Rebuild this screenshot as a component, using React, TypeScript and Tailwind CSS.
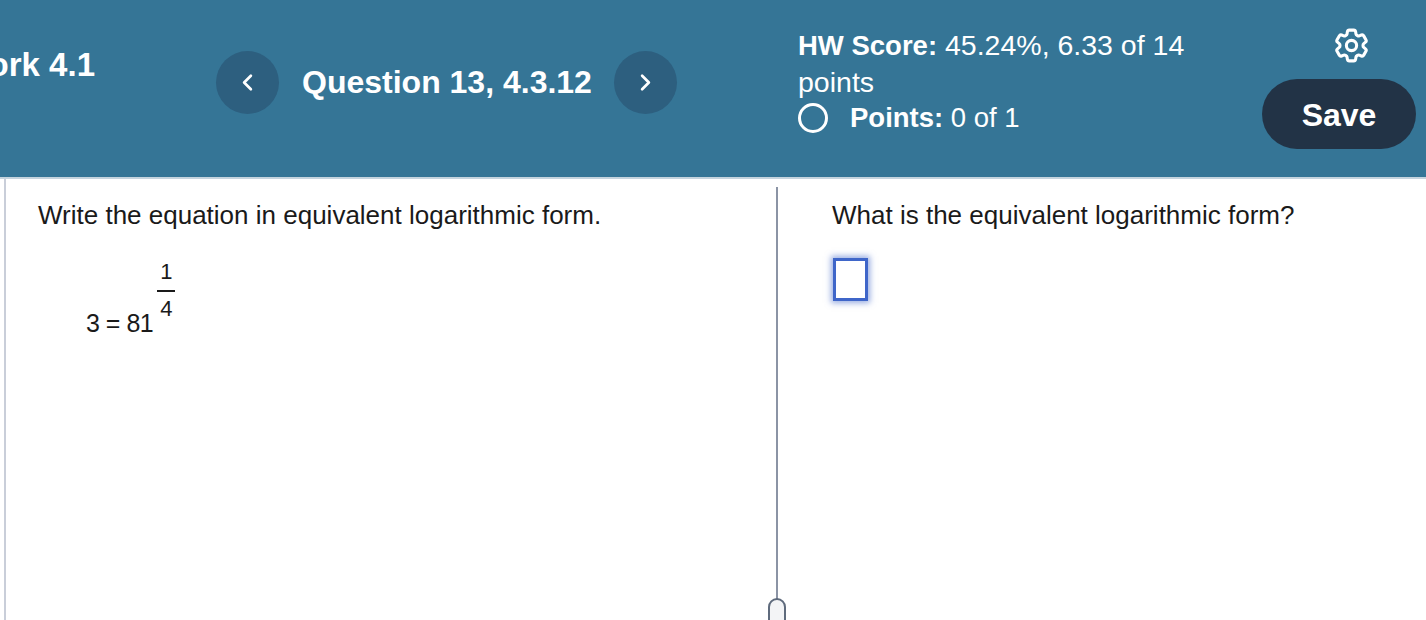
import { ChevronLeft, ChevronRight } from "lucide-react";
import { HiOutlineCog6Tooth } from "react-icons/hi2";

export default function App() {
  return (
    <div className="flex h-[620px] w-[1426px] flex-col overflow-hidden bg-white font-['Liberation_Sans',Arial,sans-serif] text-[#1a1a1a]">
      <header className="flex h-[179px] shrink-0 items-start border-b-2 border-[#c5d4de] bg-[#357596] text-white">
        <div className="mt-[42px] flex w-[95px] shrink-0 justify-end overflow-hidden whitespace-nowrap text-[33px] leading-[46px] font-bold">
          Homework 4.1
        </div>
        <nav className="mt-[51px] ml-[121px] flex items-center">
          <button className="flex h-[63px] w-[63px] items-center justify-center rounded-full bg-[#2d5f7f]">
            <ChevronLeft size={27} strokeWidth={2.4} />
          </button>
          <div className="ml-[23px] w-[312px] text-[32px] leading-[63px] font-bold whitespace-nowrap">Question 13, 4.3.12</div>
          <button className="flex h-[63px] w-[63px] items-center justify-center rounded-full bg-[#2d5f7f]">
            <ChevronRight size={27} strokeWidth={2.4} />
          </button>
        </nav>
        <div className="mt-[27px] ml-[121px] w-[420px] text-[28.5px] leading-[36px]">
          <div className="w-[400px]">
            <b className="text-[27.5px]">HW Score:</b> 45.24%, 6.33 of 14 points
          </div>
          <div className="flex items-center">
            <span className="h-[30px] w-[30px] rounded-full border-[3px] border-white" />
            <span className="ml-[22px] text-[27.5px]">
              <b>Points:</b> 0 of 1
            </span>
          </div>
        </div>
        <div className="ml-[44px] flex w-[154px] flex-col items-center">
          <HiOutlineCog6Tooth className="mt-[25px] ml-[24px]" size={41} strokeWidth={1.8} />
          <button className="mt-[13px] h-[70px] w-[154px] rounded-[35px] bg-[#223346] pt-[1px] text-[32px] font-bold">Save</button>
        </div>
      </header>
      <main className="flex flex-1 pl-[4px]">
        <section className="w-[772px] border-l-2 border-[#c9ced9] pt-[20px] pl-[32px] text-[26px] leading-[32px]">
          <p>Write the equation in equivalent logarithmic form.</p>
          <div className="mt-[29px] ml-[48px] flex items-end text-[25px] leading-[28px] tracking-[-0.5px]">
            <span>3 = 81</span>
            <span className="mb-[16px] ml-[4px] flex w-[18px] flex-col items-center text-[22px] leading-[24px]">
              <span>1</span>
              <span className="mt-[6px] mb-[5px] h-[2px] w-full bg-[#1a1a1a]" />
              <span>4</span>
            </span>
          </div>
        </section>
        <div className="relative mt-[8px] w-[2px] bg-[#8b94a5]">
          <div className="absolute top-[411px] -left-[8px] h-[40px] w-[18px] rounded-t-[9px] border-2 border-[#5f6b7d] bg-[#f3f4f6]" />
        </div>
        <section className="flex-1 pt-[20px] pl-[54px] text-[26px] leading-[32px]">
          <p>What is the equivalent logarithmic form?</p>
          <div className="mt-[27px] ml-[1px] h-[43px] w-[35px] border-[3px] border-[#3f66c9] bg-white shadow-[0_0_6px_2px_rgba(63,102,201,0.55)]" />
        </section>
      </main>
    </div>
  );
}
